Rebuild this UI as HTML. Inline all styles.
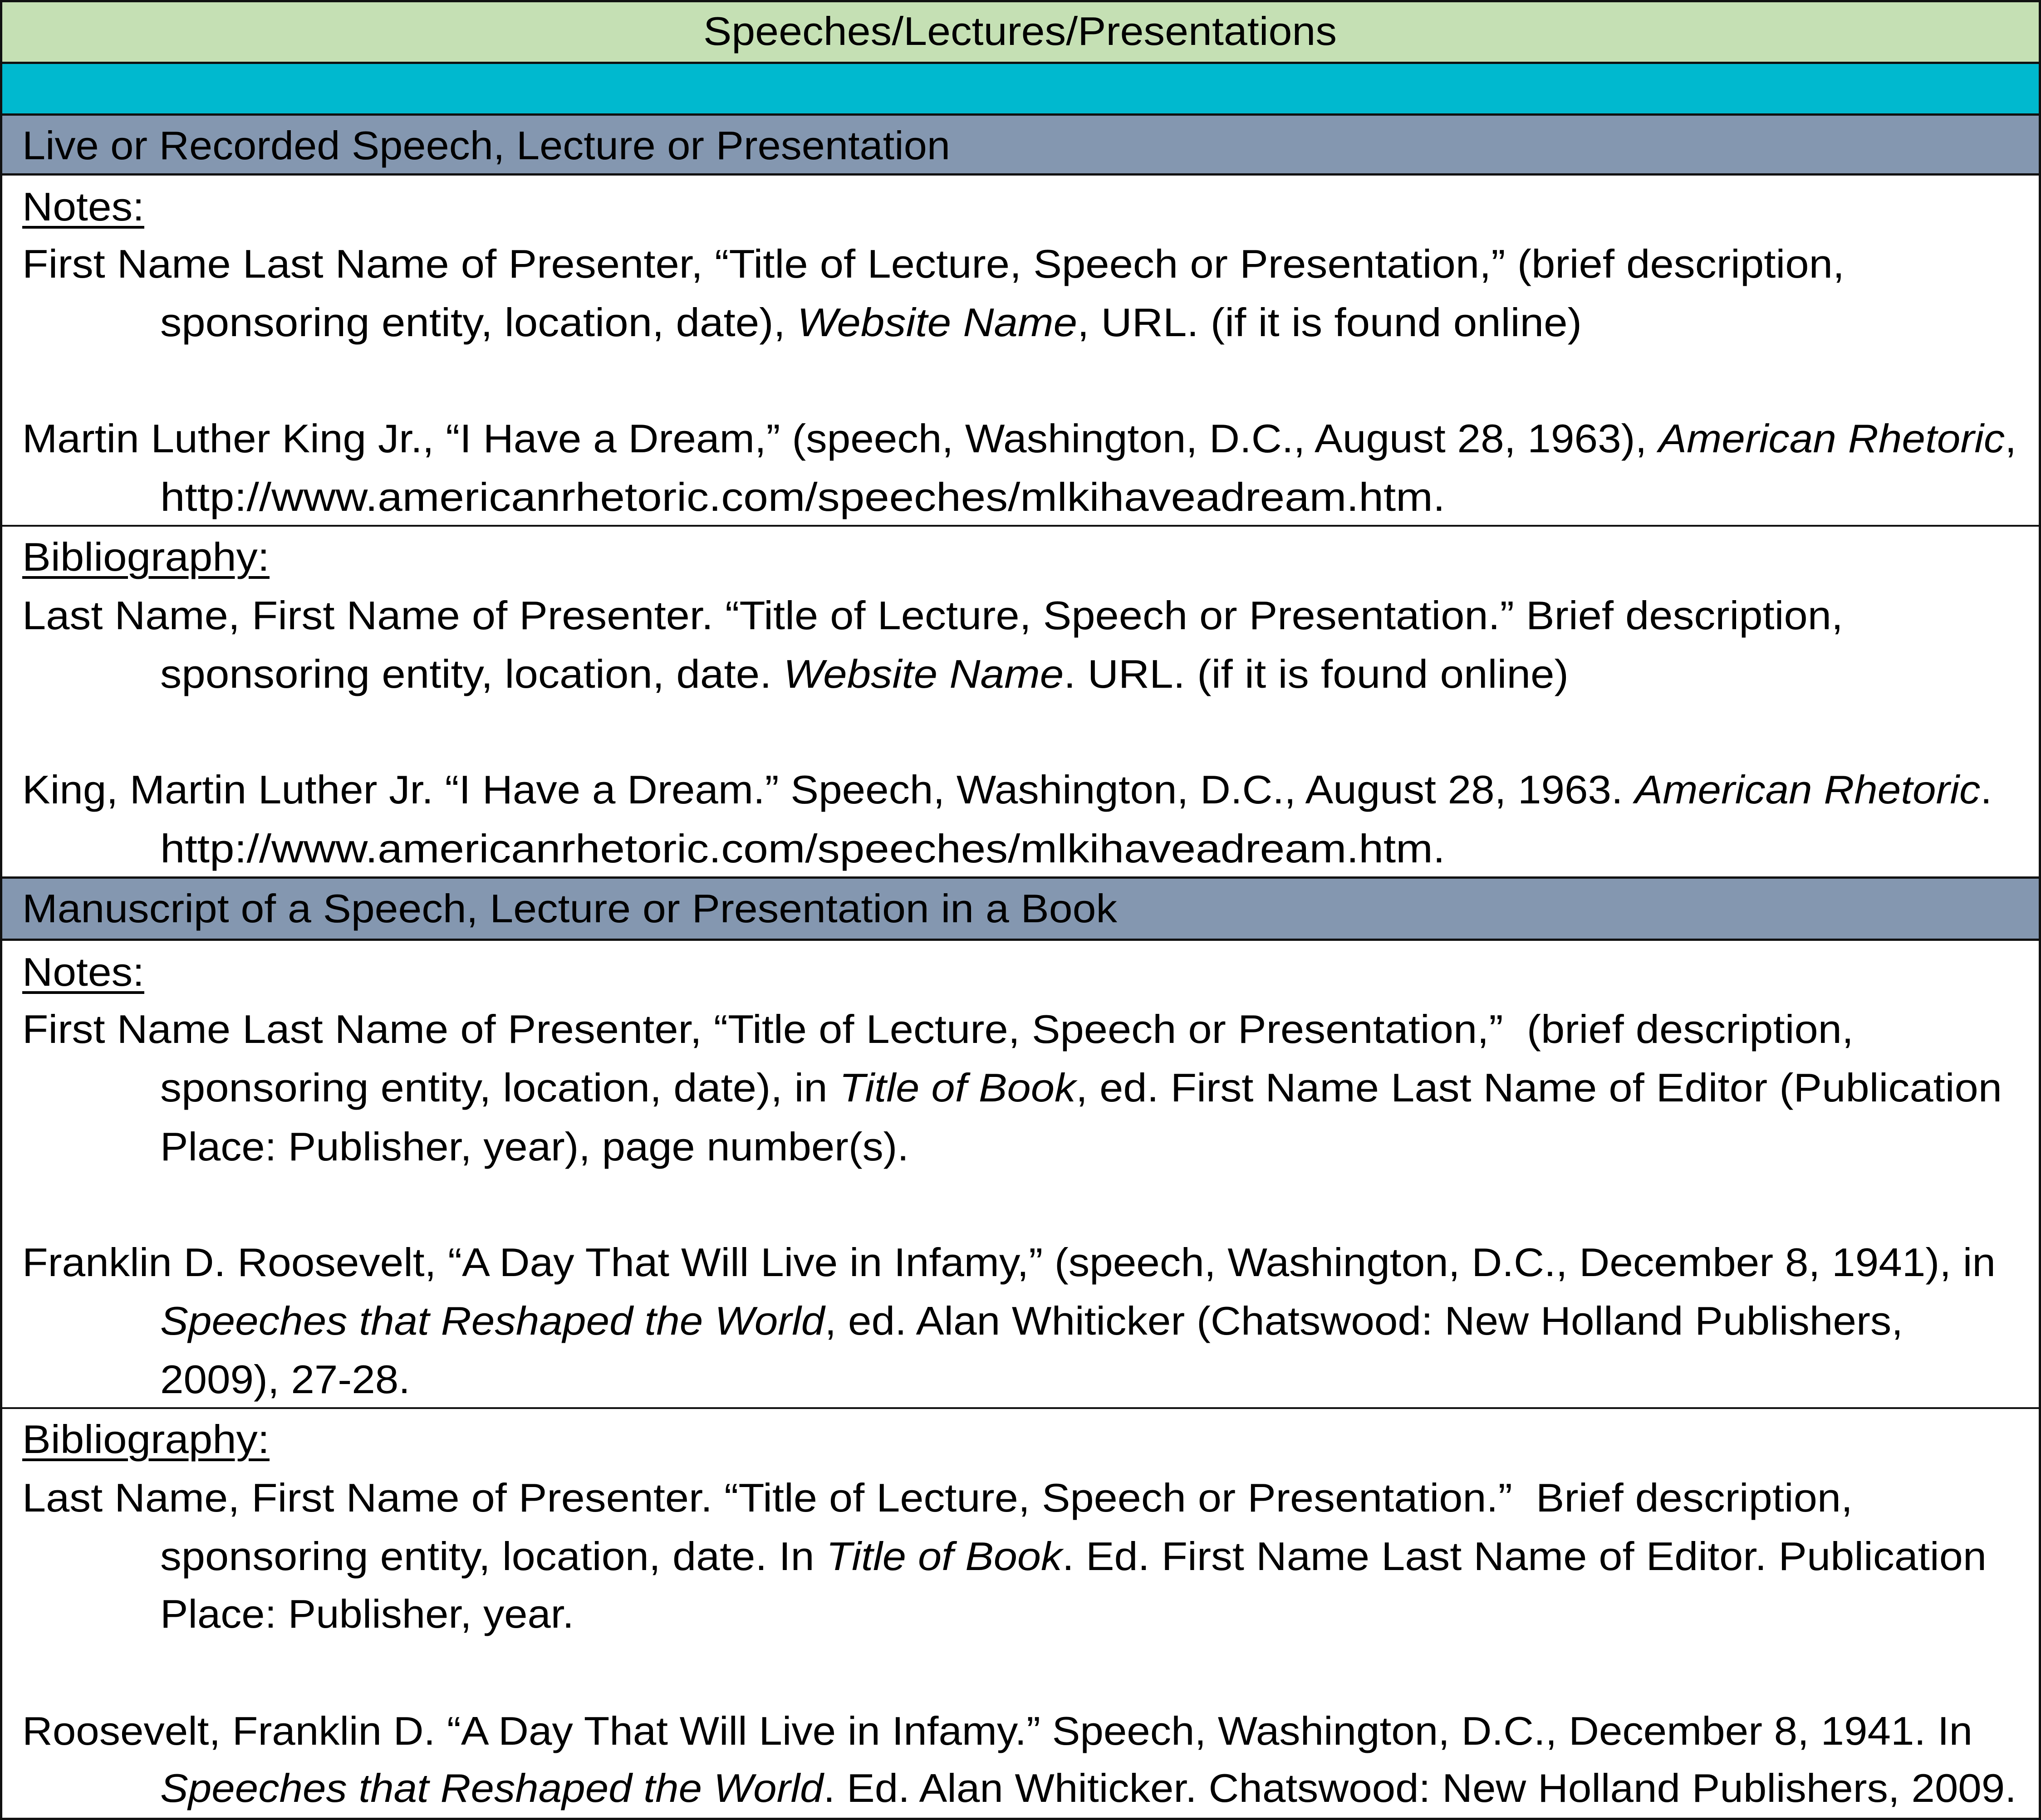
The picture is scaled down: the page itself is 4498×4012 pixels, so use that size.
<!DOCTYPE html>
<html><head><meta charset="utf-8">
<style>
html,body{margin:0;padding:0;background:#fff}
#w{position:relative;width:4498px;height:4012px;overflow:hidden;font-family:"Liberation Sans",sans-serif;color:#000}
.bg{position:absolute;left:0;width:4498px;box-sizing:border-box}
.ln{position:absolute;white-space:nowrap;font-size:88px;line-height:128px;height:128px;transform-origin:0 50%}
.u{text-decoration:underline;text-decoration-thickness:6px;text-underline-offset:12px}
.hl{position:absolute;left:0;width:4498px;height:5px;background:#111}
</style></head><body>
<div id="w">
<div class="bg" style="top:0;height:139px;background:#c5e0b4"></div>
<div class="bg" style="top:139px;height:113px;background:#00b9cf"></div>
<div class="bg" style="top:252px;height:133px;background:#8497b0"></div>
<div class="bg" style="top:1934px;height:138px;background:#8497b0"></div>
<div class="hl" style="top:0"></div>
<div class="hl" style="top:136px"></div>
<div class="hl" style="top:250px"></div>
<div class="hl" style="top:382px"></div>
<div class="hl" style="top:1157px;height:4px"></div>
<div class="hl" style="top:1932px"></div>
<div class="hl" style="top:2069px"></div>
<div class="hl" style="top:3102px;height:4px"></div>
<div class="hl" style="top:4007px"></div>
<div style="position:absolute;left:0;top:0;width:5px;height:4012px;background:#111"></div>
<div style="position:absolute;right:0;top:0;width:5px;height:4012px;background:#111"></div>

<div class="ln" id="t" style="top:5px;left:1550px">Speeches/Lectures/Presentations</div>

<div class="ln" style="top:257px;left:49px">Live or Recorded Speech, Lecture or Presentation</div>
<div class="ln u" style="top:392px;left:49px">Notes:</div>
<div class="ln" style="top:518px;left:49px">First Name Last Name of Presenter, “Title of Lecture, Speech or Presentation,” (brief description,</div>
<div class="ln" style="top:647px;left:353px">sponsoring entity, location, date), <i>Website Name</i>, URL. (if it is found online)</div>
<div class="ln" style="top:903px;left:49px">Martin Luther King Jr., “I Have a Dream,” (speech, Washington, D.C., August 28, 1963), <i>American Rhetoric</i>,</div>
<div class="ln" style="top:1032px;left:353px">http://www.americanrhetoric.com/speeches/mlkihaveadream.htm.</div>

<div class="ln u" style="top:1164px;left:49px">Bibliography:</div>
<div class="ln" style="top:1293px;left:49px">Last Name, First Name of Presenter. “Title of Lecture, Speech or Presentation.” Brief description,</div>
<div class="ln" style="top:1422px;left:353px">sponsoring entity, location, date. <i>Website Name</i>. URL. (if it is found online)</div>
<div class="ln" style="top:1677px;left:49px">King, Martin Luther Jr. “I Have a Dream.” Speech, Washington, D.C., August 28, 1963. <i>American Rhetoric</i>.</div>
<div class="ln" style="top:1807px;left:353px">http://www.americanrhetoric.com/speeches/mlkihaveadream.htm.</div>

<div class="ln" style="top:1939px;left:49px">Manuscript of a Speech, Lecture or Presentation in a Book</div>
<div class="ln u" style="top:2079px;left:49px">Notes:</div>
<div class="ln" style="top:2205px;left:49px">First Name Last Name of Presenter, “Title of Lecture, Speech or Presentation,”&nbsp; (brief description,</div>
<div class="ln" style="top:2334px;left:353px">sponsoring entity, location, date), in <i>Title of Book</i>, ed. First Name Last Name of Editor (Publication</div>
<div class="ln" style="top:2464px;left:353px">Place: Publisher, year), page number(s).</div>
<div class="ln" style="top:2719px;left:49px">Franklin D. Roosevelt, “A Day That Will Live in Infamy,” (speech, Washington, D.C., December 8, 1941), in</div>
<div class="ln" style="top:2848px;left:353px"><i>Speeches that Reshaped the World</i>, ed. Alan Whiticker (Chatswood: New Holland Publishers,</div>
<div class="ln" style="top:2977px;left:353px">2009), 27-28.</div>

<div class="ln u" style="top:3109px;left:49px">Bibliography:</div>
<div class="ln" style="top:3238px;left:49px">Last Name, First Name of Presenter. “Title of Lecture, Speech or Presentation.”&nbsp; Brief description,</div>
<div class="ln" style="top:3367px;left:353px">sponsoring entity, location, date. In <i>Title of Book</i>. Ed. First Name Last Name of Editor. Publication</div>
<div class="ln" style="top:3494px;left:353px">Place: Publisher, year.</div>
<div class="ln" style="top:3752px;left:49px">Roosevelt, Franklin D. “A Day That Will Live in Infamy.” Speech, Washington, D.C., December 8, 1941. In</div>
<div class="ln" style="top:3878px;left:353px"><i>Speeches that Reshaped the World</i>. Ed. Alan Whiticker. Chatswood: New Holland Publishers, 2009.</div>
</div>
<script>
(function(){
var R=[2946,2094,318,4065,3486,4444,3185,594,4062,3457,4390,3185,2462,318,4085,4412,2003,4398,4194,904,594,4083,4378,1265,4347,4444];
var L=[1550];
var els=document.querySelectorAll('.ln');
for(var i=0;i<els.length&&i<R.length;i++){
var e=els[i];var left=parseFloat(e.style.left);var w=e.getBoundingClientRect().width;
if(w>0){var s=(R[i]-left)/w;e.style.transform='scaleX('+s+')';}
}
})();
</script>
</body></html>
